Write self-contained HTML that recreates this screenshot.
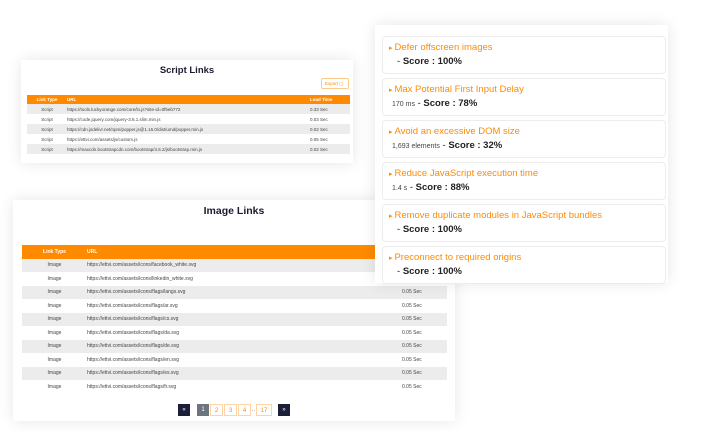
<!DOCTYPE html>
<html><head><style>
*{margin:0;padding:0;box-sizing:border-box}
body{width:708px;height:443px;background:#fff;font-family:"Liberation Sans",sans-serif;position:relative;overflow:hidden}
.card{position:absolute;background:#fff;box-shadow:0 0 14px rgba(0,0,0,.10)}
table{border-collapse:collapse;position:absolute}
th{background:#ff8a00;color:#fff;font-weight:bold;text-align:left}
td{color:#444}
.g td{background:#ececec}
.c{text-align:center!important}
.it{position:absolute;left:7px;width:284px;height:38px;border:1px solid #ececec;border-radius:4px;background:#fff}
.it .t{position:absolute;left:6px;top:5px;color:#ff8a00;font-size:9.5px}
.it .t:before{content:"▸ ";font-size:7px}
.it .s{position:absolute;left:14px;top:19px;color:#222;font-size:9.5px}
.it .s small{font-size:7px;color:#444}
.pg{position:absolute;top:404px;height:12px;font-size:6px;text-align:center;line-height:12px}
</style></head><body>
<div class="card" style="left:21px;top:60px;width:332px;height:103px">
<div style="position:absolute;top:5px;width:100%;text-align:center;font-weight:bold;font-size:9.5px;color:#1b1b2f">Script Links</div>
<div style="position:absolute;left:300px;top:18px;width:28px;height:11px;border:1px solid #ffc98a;border-radius:2px;font-size:4.5px;color:#ff8a00;line-height:9px;padding-left:3px">Export ▢</div>
<table style="left:6px;top:35px;width:323px;font-size:4.5px">
<tr style="height:9px"><th class="c" style="width:40px">Link Type</th><th>URL</th><th style="width:40px">Load Time</th></tr>
<tr class="g" style="height:10px"><td class="c">Script</td><td>https://tools.luckyorange.com/core/lo.js?site-id=0f5eb772</td><td>0.33 Sec</td></tr>
<tr style="height:10px"><td class="c">Script</td><td>https://code.jquery.com/jquery-3.6.1.slim.min.js</td><td>0.03 Sec</td></tr>
<tr class="g" style="height:10px"><td class="c">Script</td><td>https://cdn.jsdelivr.net/npm/popper.js@1.16.0/dist/umd/popper.min.js</td><td>0.02 Sec</td></tr>
<tr style="height:10px"><td class="c">Script</td><td>https://ettvi.com/assets/js/custom.js</td><td>0.05 Sec</td></tr>
<tr class="g" style="height:10px"><td class="c">Script</td><td>https://maxcdn.bootstrapcdn.com/bootstrap/4.5.2/js/bootstrap.min.js</td><td>0.02 Sec</td></tr>
</table></div>

<div class="card" style="left:13px;top:200px;width:442px;height:221px">
<div style="position:absolute;top:5px;width:100%;text-align:center;font-weight:bold;font-size:10.5px;color:#1b1b2f">Image Links</div>
<table style="left:9px;top:45px;width:425px;font-size:5px">
<tr style="height:13.5px"><th class="c" style="width:65px">Link Type</th><th>URL</th><th style="width:45px">Load Time</th></tr>
<tr class="g" style="height:13.5px"><td class="c">Image</td><td>https://ettvi.com/assets/icons/facebook_white.svg</td><td>0.05 Sec</td></tr>
<tr style="height:13.5px"><td class="c">Image</td><td>https://ettvi.com/assets/icons/linkedin_white.svg</td><td>0.05 Sec</td></tr>
<tr class="g" style="height:13.5px"><td class="c">Image</td><td>https://ettvi.com/assets/icons/flags/langs.svg</td><td>0.05 Sec</td></tr>
<tr style="height:13.5px"><td class="c">Image</td><td>https://ettvi.com/assets/icons/flags/ar.svg</td><td>0.05 Sec</td></tr>
<tr class="g" style="height:13.5px"><td class="c">Image</td><td>https://ettvi.com/assets/icons/flags/cs.svg</td><td>0.05 Sec</td></tr>
<tr style="height:13.5px"><td class="c">Image</td><td>https://ettvi.com/assets/icons/flags/da.svg</td><td>0.05 Sec</td></tr>
<tr class="g" style="height:13.5px"><td class="c">Image</td><td>https://ettvi.com/assets/icons/flags/de.svg</td><td>0.05 Sec</td></tr>
<tr style="height:13.5px"><td class="c">Image</td><td>https://ettvi.com/assets/icons/flags/en.svg</td><td>0.05 Sec</td></tr>
<tr class="g" style="height:13.5px"><td class="c">Image</td><td>https://ettvi.com/assets/icons/flags/es.svg</td><td>0.05 Sec</td></tr>
<tr style="height:13.5px"><td class="c">Image</td><td>https://ettvi.com/assets/icons/flags/fr.svg</td><td>0.05 Sec</td></tr>
</table></div>
<div class="pg" style="left:178px;width:12px;background:#1b1f3a;color:#fff">«</div>
<div class="pg" style="left:197px;width:12px;background:#6c757d;color:#fff">1</div>
<div class="pg" style="left:210px;width:13px;border:1px solid #ffd3a3;color:#ff8a00">2</div>
<div class="pg" style="left:224px;width:13px;border:1px solid #ffd3a3;color:#ff8a00">3</div>
<div class="pg" style="left:238px;width:13px;border:1px solid #ffd3a3;color:#ff8a00">4</div>
<div class="pg" style="left:251px;width:5px;color:#888">..</div>
<div class="pg" style="left:256px;width:16px;border:1px solid #ffd3a3;color:#ff8a00">17</div>
<div class="pg" style="left:278px;width:12px;background:#1b1f3a;color:#fff">»</div>

<div class="card" style="left:375px;top:25px;width:293px;height:258px">
<div class="it" style="top:11px"><div class="t">Defer offscreen images</div><div class="s">- <b>Score : 100%</b></div></div>
<div class="it" style="top:53px"><div class="t">Max Potential First Input Delay</div><div class="s" style="left:9px"><small>170 ms</small> - <b>Score : 78%</b></div></div>
<div class="it" style="top:95px"><div class="t">Avoid an excessive DOM size</div><div class="s" style="left:9px"><small>1,693 elements</small> - <b>Score : 32%</b></div></div>
<div class="it" style="top:137px"><div class="t">Reduce JavaScript execution time</div><div class="s" style="left:9px"><small>1.4 s</small> - <b>Score : 88%</b></div></div>
<div class="it" style="top:179px"><div class="t">Remove duplicate modules in JavaScript bundles</div><div class="s">- <b>Score : 100%</b></div></div>
<div class="it" style="top:221px"><div class="t">Preconnect to required origins</div><div class="s">- <b>Score : 100%</b></div></div>
</div>
</body></html>
